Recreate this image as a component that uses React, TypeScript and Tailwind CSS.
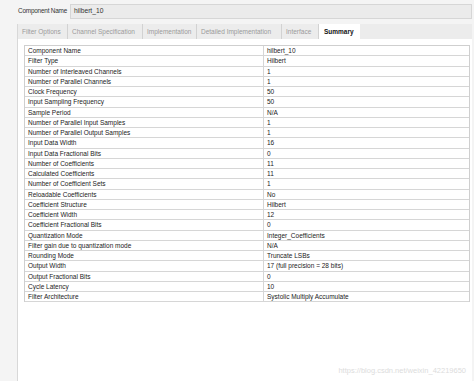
import React from "react";

const rows: [string, string][] = [
  ["Component Name", "hilbert_10"],
  ["Filter Type", "Hilbert"],
  ["Number of Interleaved Channels", "1"],
  ["Number of Parallel Channels", "1"],
  ["Clock Frequency", "50"],
  ["Input Sampling Frequency", "50"],
  ["Sample Period", "N/A"],
  ["Number of Parallel Input Samples", "1"],
  ["Number of Parallel Output Samples", "1"],
  ["Input Data Width", "16"],
  ["Input Data Fractional Bits", "0"],
  ["Number of Coefficients", "11"],
  ["Calculated Coefficients", "11"],
  ["Number of Coefficient Sets", "1"],
  ["Reloadable Coefficients", "No"],
  ["Coefficient Structure", "Hilbert"],
  ["Coefficient Width", "12"],
  ["Coefficient Fractional Bits", "0"],
  ["Quantization Mode", "Integer_Coefficients"],
  ["Filter gain due to quantization mode", "N/A"],
  ["Rounding Mode", "Truncate LSBs"],
  ["Output Width", "17 (full precision = 28 bits)"],
  ["Output Fractional Bits", "0"],
  ["Cycle Latency", "10"],
  ["Filter Architecture", "Systolic Multiply Accumulate"],
];

const tabs: { label: string; w: string; active?: boolean }[] = [
  { label: "Filter Options", w: "w-[50px]" },
  { label: "Channel Specification", w: "w-[75px]" },
  { label: "Implementation", w: "w-[54px]" },
  { label: "Detailed Implementation", w: "w-[85px]" },
  { label: "Interface", w: "w-[37px]" },
  { label: "Summary", w: "w-[41px]", active: true },
];

export default function App() {
  return (
    <div className="w-[474px] h-[381px] bg-[#f4f4f4] relative overflow-hidden font-['Liberation_Sans',Arial,sans-serif] text-[6.5px] text-[#222]">
      <div className="h-[24px] flex items-center pl-[18px] pr-[2px] pb-[2px]">
        <span className="w-[52px] shrink-0 whitespace-nowrap text-[#333] text-[6.4px] tracking-[-0.2px]">Component Name</span>
        <div className="flex-1 h-[15px] bg-[#ebebeb] border border-[#d6d6d6] flex items-center pl-[3px] text-[#333] text-[6.7px]">
          hilbert_10
        </div>
      </div>
      <div className="ml-[17px] mr-[2px] h-[15px] bg-[#ececec] border-l border-[#d8d8d8] flex">
        {tabs.map((t, i) => (
          <div
            key={i}
            className={
              t.active
                ? `${t.w} bg-white flex items-center pl-[5px] font-bold text-[#111] whitespace-nowrap`
                : `${t.w} flex items-center pl-[4px] text-[#9a9a9a] border-r border-[#d2d2d2] whitespace-nowrap`
            }
          >
            {t.label}
          </div>
        ))}
      </div>
      <div className="ml-[17px] mr-[2px] h-[342px] bg-white border-l border-[#d8d8d8] pt-[6px] pl-[6px] pr-[2px]">
        <div className="border border-[#cfcfcf] border-b-0">
          {rows.map(([k, v], i) => (
            <div key={i} className="flex h-[10.25px] border-b border-[#d6d6d6] leading-[9px]">
              <div className="w-[239px] pl-[3px] border-r border-[#d6d6d6] flex items-center whitespace-nowrap">{k}</div>
              <div className="flex-1 pl-[3px] flex items-center whitespace-nowrap">{v}</div>
            </div>
          ))}
        </div>
      </div>
      <div className="absolute right-[8px] bottom-[5px] text-[7.5px] text-[#dcdcdc]">
        https://blog.csdn.net/weixin_42219650
      </div>
    </div>
  );
}
